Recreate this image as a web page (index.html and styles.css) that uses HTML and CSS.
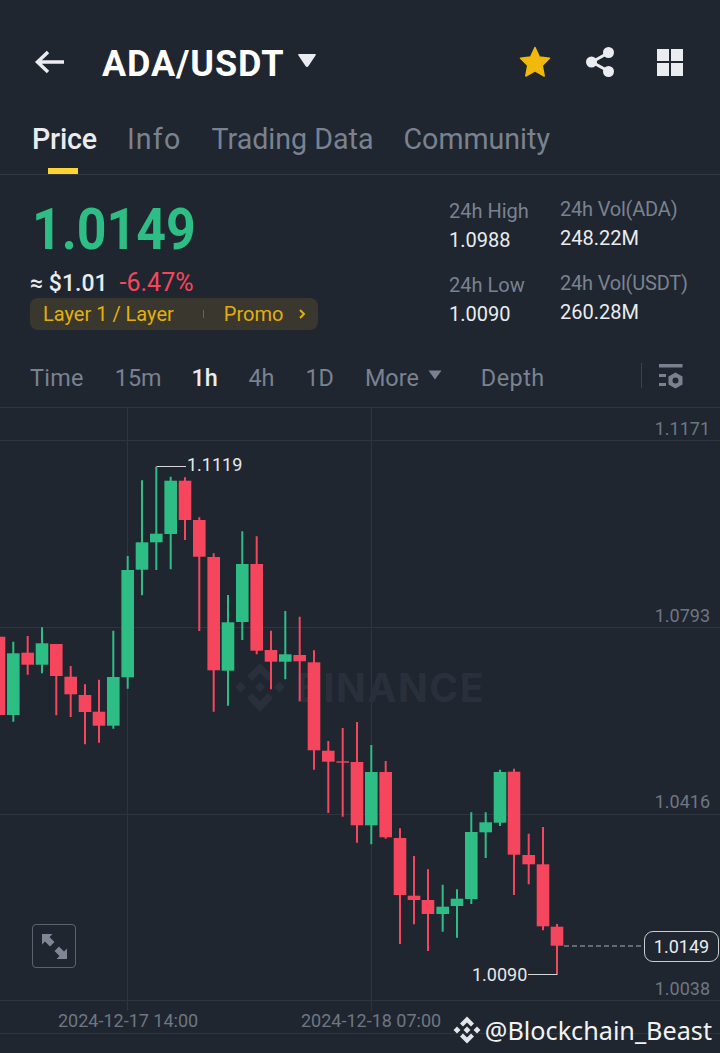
FILE: index.html
```html
<!DOCTYPE html>
<html lang="en">
<head>
  <meta charset="UTF-8">
  <meta name="viewport" content="width=device-width, initial-scale=1.0">
  <title>ADA/USDT</title>
  <link rel="stylesheet" href="styles.css">
</head>
<body>
  <!-- Top bar -->
  <header class="topbar">
    <svg class="icon-back" viewBox="0 0 32 26"><path d="M30 13H4M14 3L3.5 13L14 23"/></svg>
    <h1 class="pair">ADA/USDT</h1>
    <svg class="icon-caret" viewBox="0 0 18 14"><path d="M1 0H17Q18.500 0 17.500 1.500L10.500 12Q9 14 7.500 12L0.500 1.500Q-0.500 0 1 0Z"/></svg>
    <div class="topbar-actions">
      <svg class="icon-star" viewBox="0 0 32 32"><path d="M16 1.5L20.4 11L30.5 12.3L23.2 19.5L25.2 30L16 24.8L6.800 30L8.800 19.5L1.5 12.3L11.6 11Z"/></svg>
      <svg class="icon-share" viewBox="0 0 32 32"><path class="share-line" d="M24 7L8 16L24 25"/><circle cx="24.5" cy="6.5" r="5.5"/><circle cx="7.5" cy="16" r="5.5"/><circle cx="24.5" cy="25.5" r="5.5"/></svg>
      <div class="icon-grid"><span></span><span></span><span></span><span></span></div>
    </div>
  </header>

  <!-- Tabs -->
  <nav class="tabs">
    <a class="tab active">Price</a>
    <a class="tab tab-info">Info</a>
    <a class="tab">Trading Data</a>
    <a class="tab">Community</a>
  </nav>

  <!-- Price and 24h stats -->
  <section class="summary">
    <div class="price-box">
      <div class="last-price">1.0149</div>
      <div class="price-sub"><span class="fiat">≈ $1.01</span><span class="change">-6.47%</span></div>
      <div class="promo">
        <span>Layer 1 / Layer</span>
        <i class="promo-sep"></i>
        <span>Promo</span>
        <svg class="promo-arrow" viewBox="0 0 8 12"><path d="M2 2L6 6L2 10"/></svg>
      </div>
    </div>
    <div class="stats">
      <div class="stat"><label>24h High</label><b>1.0988</b></div>
      <div class="stat stat-vol"><label>24h Vol(ADA)</label><b>248.22M</b></div>
      <div class="stat"><label>24h Low</label><b>1.0090</b></div>
      <div class="stat stat-vol"><label>24h Vol(USDT)</label><b>260.28M</b></div>
    </div>
  </section>

  <!-- Timeframes -->
  <div class="timeframes">
    <span class="tf tf-time">Time</span>
    <span class="tf tf-15m">15m</span>
    <span class="tf tf-1h active">1h</span>
    <span class="tf tf-4h">4h</span>
    <span class="tf tf-1d">1D</span>
    <span class="tf tf-more">More</span>
    <svg class="icon-more" viewBox="0 0 14 10"><path d="M0.500 0.500H13.500L7 9.500Z"/></svg>
    <span class="tf tf-depth">Depth</span>
    <i class="tf-sep"></i>
    <svg class="icon-settings" viewBox="0 0 24 25">
      <path d="M0 0H23.500V3.500H0ZM0 10H7V13H0ZM0 19H7V22H0Z"/>
      <path fill-rule="evenodd" d="M16.500 8.500L23.500 12.500V20.500L16.500 24.500L9.500 20.500V12.500ZM16.500 13.500A3 3 0 1 0 16.500 19.500A3 3 0 1 0 16.500 13.500Z"/>
    </svg>
  </div>

  <!-- Chart: coordinates in the viewBox are page coordinates -->
  <div class="chart">
    <svg class="chart-svg" viewBox="0 407 720 646">
      <g class="grid">
        <path d="M0 407.5H720M0 440.5H720M0 627.5H720M0 814.5H720M0 1000.5H720M0 1033.5H720"/>
        <path d="M127.5 407V1011M371.5 407V1011"/>
      </g>

      <g class="watermark">
        <path d="M260 663L273 676L268 681L260 673L252 681L247 676ZM235 687L240.500 681.500L246 687L240.500 692.500ZM274 687L279.500 681.500L285 687L279.500 692.500ZM255 687L260 682L265 687L260 692ZM247 698L252 693L260 701L268 693L273 698L260 712Z"/>
        <text x="296" y="702">BINANCE</text>
      </g>

      <g class="wicks up">
        <path d="M13.3 641.7V721.7M42 627.3V673.3M113.3 630.7V728.7M127.7 556V688.7M142 480.3V595.3M156.3 466.7V570M170.7 476.7V569.3M228 595V705.7M242.3 531.3V640M285.3 611V679.3M371.3 745V844.3M442.7 884.7V931.7M457 889.3V937.7M471.3 812.3V904M485.7 812.3V858M500 769.7V826"/>
      </g>
      <g class="wicks down">
        <path d="M-1 630V720M27.7 636V674.7M56.3 644V715.3M70.7 666V717M85 684.3V744.3M99 679.7V742.7M185 477.3V540M199.3 517.3V631M213.7 553.3V711.7M256.7 536.3V654.3M271 630.7V689.3M299.7 616.7V701.3M314 650.3V769.7M328.3 741V813M342.7 728V816.7M357 722V842.7M385.7 761V838.7M400 828.3V944M414 856V924.3M428 869.3V951M514 768.7V895M528.7 833.7V884.3M543 827V930.3M557 924V975"/>
      </g>

      <g class="bodies up">
        <rect x="7" y="653.3" width="12.6" height="61.7"/>
        <rect x="35.7" y="643.3" width="12.6" height="21.4"/>
        <rect x="107" y="677" width="12.6" height="48.7"/>
        <rect x="121.4" y="570" width="12.6" height="107.3"/>
        <rect x="135.7" y="542.3" width="12.6" height="27.4"/>
        <rect x="150" y="533.7" width="12.6" height="8.6"/>
        <rect x="164.4" y="480.7" width="12.6" height="53.3"/>
        <rect x="221.7" y="622.3" width="12.6" height="48.4"/>
        <rect x="236" y="564" width="12.6" height="58"/>
        <rect x="279" y="654.3" width="12.6" height="7.4"/>
        <rect x="365" y="772" width="12.6" height="53.3"/>
        <rect x="436.4" y="906.7" width="12.6" height="7.3"/>
        <rect x="450.7" y="898.7" width="12.6" height="7.3"/>
        <rect x="465" y="832" width="12.6" height="67"/>
        <rect x="479.4" y="822.3" width="12.6" height="10"/>
        <rect x="493.7" y="772" width="12.6" height="50.7"/>
      </g>
      <g class="bodies down">
        <rect x="-7.3" y="636.7" width="12.6" height="78.3"/>
        <rect x="21.4" y="652.7" width="12.6" height="12"/>
        <rect x="50" y="644" width="12.6" height="32"/>
        <rect x="64.4" y="676.7" width="12.6" height="17.6"/>
        <rect x="78.7" y="695" width="12.6" height="17"/>
        <rect x="92.7" y="711.7" width="12.6" height="14"/>
        <rect x="178.7" y="480.7" width="12.6" height="39.3"/>
        <rect x="193" y="520" width="12.6" height="36.7"/>
        <rect x="207.4" y="557" width="12.6" height="113.3"/>
        <rect x="250.4" y="564" width="12.6" height="86.7"/>
        <rect x="264.7" y="650" width="12.6" height="11.7"/>
        <rect x="293.4" y="655" width="12.6" height="6.3"/>
        <rect x="307.7" y="662.3" width="12.6" height="88"/>
        <rect x="322" y="750.7" width="12.6" height="11"/>
        <rect x="336.4" y="761.3" width="12.6" height="1.4"/>
        <rect x="350.7" y="762" width="12.6" height="63.3"/>
        <rect x="379.4" y="772" width="12.6" height="65.3"/>
        <rect x="393.7" y="838" width="12.6" height="57"/>
        <rect x="407.7" y="895.7" width="12.6" height="4.3"/>
        <rect x="421.7" y="900" width="12.6" height="14"/>
        <rect x="507.7" y="771.7" width="12.6" height="83"/>
        <rect x="522.4" y="855" width="12.6" height="9.3"/>
        <rect x="536.7" y="864.3" width="12.6" height="62"/>
        <rect x="550.7" y="926.7" width="12.6" height="19"/>
      </g>

      <!-- High, low and last price markers -->
      <path class="marker" d="M156.5 466.5H186M528 974.5H557"/>
      <path class="marker dashed" d="M564 946H644"/>
      <text class="mark-label" x="187" y="471">1.1119</text>
      <text class="mark-label" x="472" y="981">1.0090</text>

      <g class="axis-y">
        <text x="710" y="435" text-anchor="end">1.1171</text>
        <text x="710" y="622" text-anchor="end">1.0793</text>
        <text x="710" y="808" text-anchor="end">1.0416</text>
        <text x="710" y="995" text-anchor="end">1.0038</text>
      </g>
      <g class="axis-x">
        <text x="58" y="1027">2024-12-17 14:00</text>
        <text x="301" y="1027">2024-12-18 07:00</text>
      </g>
    </svg>

    <div class="last-tag">1.0149</div>

    <div class="expand">
      <svg viewBox="0 0 25 25"><path d="M0 0H10.500L7.500 3L12.500 8L8 12.500L3 7.500L0 10.500ZM25 25H14.500L17.500 22L12.500 17L17 12.500L22 17.500L25 14.500Z"/></svg>
    </div>

    <div class="credit">
      <svg viewBox="0 0 28 28"><path d="M14 0.500L21 7.500L18 10.500L14 6.500L10 10.500L7 7.500ZM0.500 14L4 10.500L7.500 14L4 17.500ZM20.500 14L24 10.500L27.500 14L24 17.500ZM10.500 14L14 10.500L17.500 14L14 17.500ZM7 20.500L10 17.500L14 21.500L18 17.500L21 20.500L14 27.500Z"/></svg>
      <span>@Blockchain_Beast</span>
    </div>
  </div>
</body>
</html>
```

FILE: styles.css
```css
/* Base */
html, body {
  margin: 0;
  padding: 0;
}

body {
  width: 720px;
  height: 1053px;
  overflow: hidden;
  background-color: #1f2630;
  color: #eaecef;
  font-family: Roboto, "Liberation Sans", sans-serif;
}

svg {
  flex: none;
}

/* Top bar */
.topbar {
  display: flex;
  align-items: center;
  height: 126px;
  box-sizing: border-box;
  padding: 0 37px 2px 34px;
}

.icon-back {
  width: 32px;
  height: 26px;
  fill: none;
  stroke: #eaecef;
  stroke-width: 3.5;
}

.pair {
  margin: 4px 0 0 36px;
  font-size: 36px;
  font-weight: 700;
  color: #fff;
  letter-spacing: 0.9px;
}

.icon-caret {
  width: 18px;
  height: 14px;
  margin: -2px 0 0 14px;
  fill: #eaecef;
}

.topbar-actions {
  display: flex;
  align-items: center;
  margin-left: auto;
}

.icon-star {
  width: 32px;
  height: 32px;
  fill: #f0b90b;
  stroke: #f0b90b;
  stroke-width: 1.5;
  stroke-linejoin: round;
}

.icon-share {
  width: 32px;
  height: 32px;
  margin-left: 33px;
  fill: #eaecef;
}

.share-line {
  fill: none;
  stroke: #eaecef;
  stroke-width: 3;
}

.icon-grid {
  display: grid;
  grid-template-columns: 12px 12px;
  grid-auto-rows: 12.5px;
  gap: 2px;
  margin-left: 41px;
}

.icon-grid span {
  background-color: #eaecef;
}

/* Tabs */
.tabs {
  display: flex;
  gap: 30px;
  height: 49px;
  box-sizing: border-box;
  padding-left: 32px;
  border-bottom: 1px solid #333a45;
}

.tab {
  position: relative;
  font-size: 28.6px;
  line-height: 26px;
  color: #7a8290;
}

.tab-info {
  letter-spacing: 1.2px;
}

.tab.active {
  color: #eaecef;
  font-weight: 500;
  letter-spacing: -0.2px;
}

.tab.active::after {
  content: "";
  position: absolute;
  left: 16px;
  bottom: 0;
  width: 30px;
  height: 6px;
  background-color: #fcd535;
}

/* Price summary */
.summary {
  display: flex;
  justify-content: space-between;
  height: 174px;
}

.price-box {
  padding: 22px 0 0 30px;
}

.last-price {
  margin-left: 2px;
  font-size: 57px;
  line-height: 66px;
  font-weight: 700;
  color: #2ebd85;
  transform: scaleX(0.91);
  transform-origin: left center;
}

.price-sub {
  margin-top: 7px;
  font-size: 23px;
  line-height: 26px;
}

.fiat {
  color: #eaecef;
  font-weight: 500;
}

.change {
  margin-left: 12px;
  color: #f6465d;
  font-size: 25px;
}

.promo {
  display: flex;
  align-items: center;
  width: 288px;
  height: 32px;
  margin-top: 1px;
  padding-left: 13px;
  box-sizing: border-box;
  border-radius: 8px;
  background-color: #3a382e;
  color: #e3af0c;
  font-size: 20px;
}

.promo-sep {
  width: 1px;
  height: 8px;
  margin: 0 20px 0 29px;
  background-color: #6e6436;
}

.promo-arrow {
  width: 8px;
  height: 12px;
  margin-left: 15px;
  fill: none;
  stroke: #e3af0c;
  stroke-width: 2;
}

.stats {
  display: grid;
  grid-template-columns: 111px 160px;
  grid-auto-rows: 74px;
  margin-top: 22px;
  width: 271px;
}

.stat label {
  display: block;
  font-size: 20px;
  line-height: 28px;
  color: #7a8290;
  white-space: nowrap;
}

.stat b {
  display: block;
  margin-top: 3px;
  font-size: 20px;
  line-height: 24px;
  font-weight: 400;
  color: #eaecef;
}

.stat-vol {
  margin-top: -2px;
}

.stat-vol label {
  letter-spacing: -0.2px;
}

/* Timeframes */
.timeframes {
  display: flex;
  align-items: center;
  height: 58px;
  padding-left: 30px;
  font-size: 23.4px;
  color: #7a8290;
}

.tf-time { letter-spacing: 0.3px; }
.tf-15m { margin-left: 31px; }
.tf-1h { margin-left: 30px; }
.tf-4h { margin-left: 30.5px; }
.tf-1d { margin-left: 31px; }
.tf-more { margin-left: 31px; }
.tf-depth { margin-left: 39px; letter-spacing: 0.5px; }

.tf.active {
  color: #eaecef;
  font-weight: 500;
}

.icon-more {
  width: 14px;
  height: 10px;
  margin: -6px 0 0 9px;
  fill: #7a8290;
}

.tf-sep {
  flex: none;
  width: 1px;
  height: 25px;
  margin: -5px 0 0 96px;
  background-color: #3b424e;
}

.icon-settings {
  width: 24px;
  height: 25px;
  margin: -3px 0 0 17px;
  fill: #7a8290;
}

/* Chart */
.chart {
  position: relative;
  height: 646px;
}

.chart-svg {
  display: block;
  width: 720px;
  height: 646px;
}

.grid path {
  fill: none;
  stroke: #2e353f;
  stroke-width: 1;
}

.watermark {
  fill: #2a303b;
}

.watermark text {
  font-family: Inter, sans-serif;
  font-size: 39px;
  font-weight: 700;
  letter-spacing: 1.6px;
}

.wicks path {
  fill: none;
  stroke-width: 2;
}

.wicks.up path { stroke: #2ebd85; }
.wicks.down path { stroke: #f6465d; }
.bodies.up { fill: #2ebd85; }
.bodies.down { fill: #f6465d; }

.marker {
  fill: none;
  stroke: #d5d8dd;
  stroke-width: 1;
}

.marker.dashed {
  stroke: #a9adb4;
  stroke-dasharray: 5 3;
}

.mark-label {
  fill: #e6e8ea;
  font-size: 18px;
}

.axis-y text,
.axis-x text {
  fill: #6f7682;
  font-size: 18px;
}

.last-tag {
  position: absolute;
  left: 644px;
  top: 524px;
  width: 75px;
  height: 31px;
  box-sizing: border-box;
  border: 1px solid #c9ccd1;
  border-radius: 9px;
  background-color: #1f2630;
  color: #eaecef;
  font-size: 18px;
  line-height: 29px;
  text-align: center;
}

.expand {
  position: absolute;
  left: 32px;
  top: 517px;
  display: flex;
  align-items: center;
  justify-content: center;
  width: 44px;
  height: 44px;
  box-sizing: border-box;
  border: 1px solid #5b626e;
  border-radius: 4px;
}

.expand svg {
  width: 25px;
  height: 25px;
  fill: #7f8694;
}

/* Author mark, bottom right */
.credit {
  position: absolute;
  right: 8px;
  bottom: 7px;
  display: flex;
  align-items: center;
  gap: 4px;
  color: #f2f3f5;
  font-family: "Noto Sans", sans-serif;
  font-size: 25.2px;
  line-height: 32px;
}

.credit svg {
  width: 28px;
  height: 28px;
  fill: #e3e5e8;
}
```
